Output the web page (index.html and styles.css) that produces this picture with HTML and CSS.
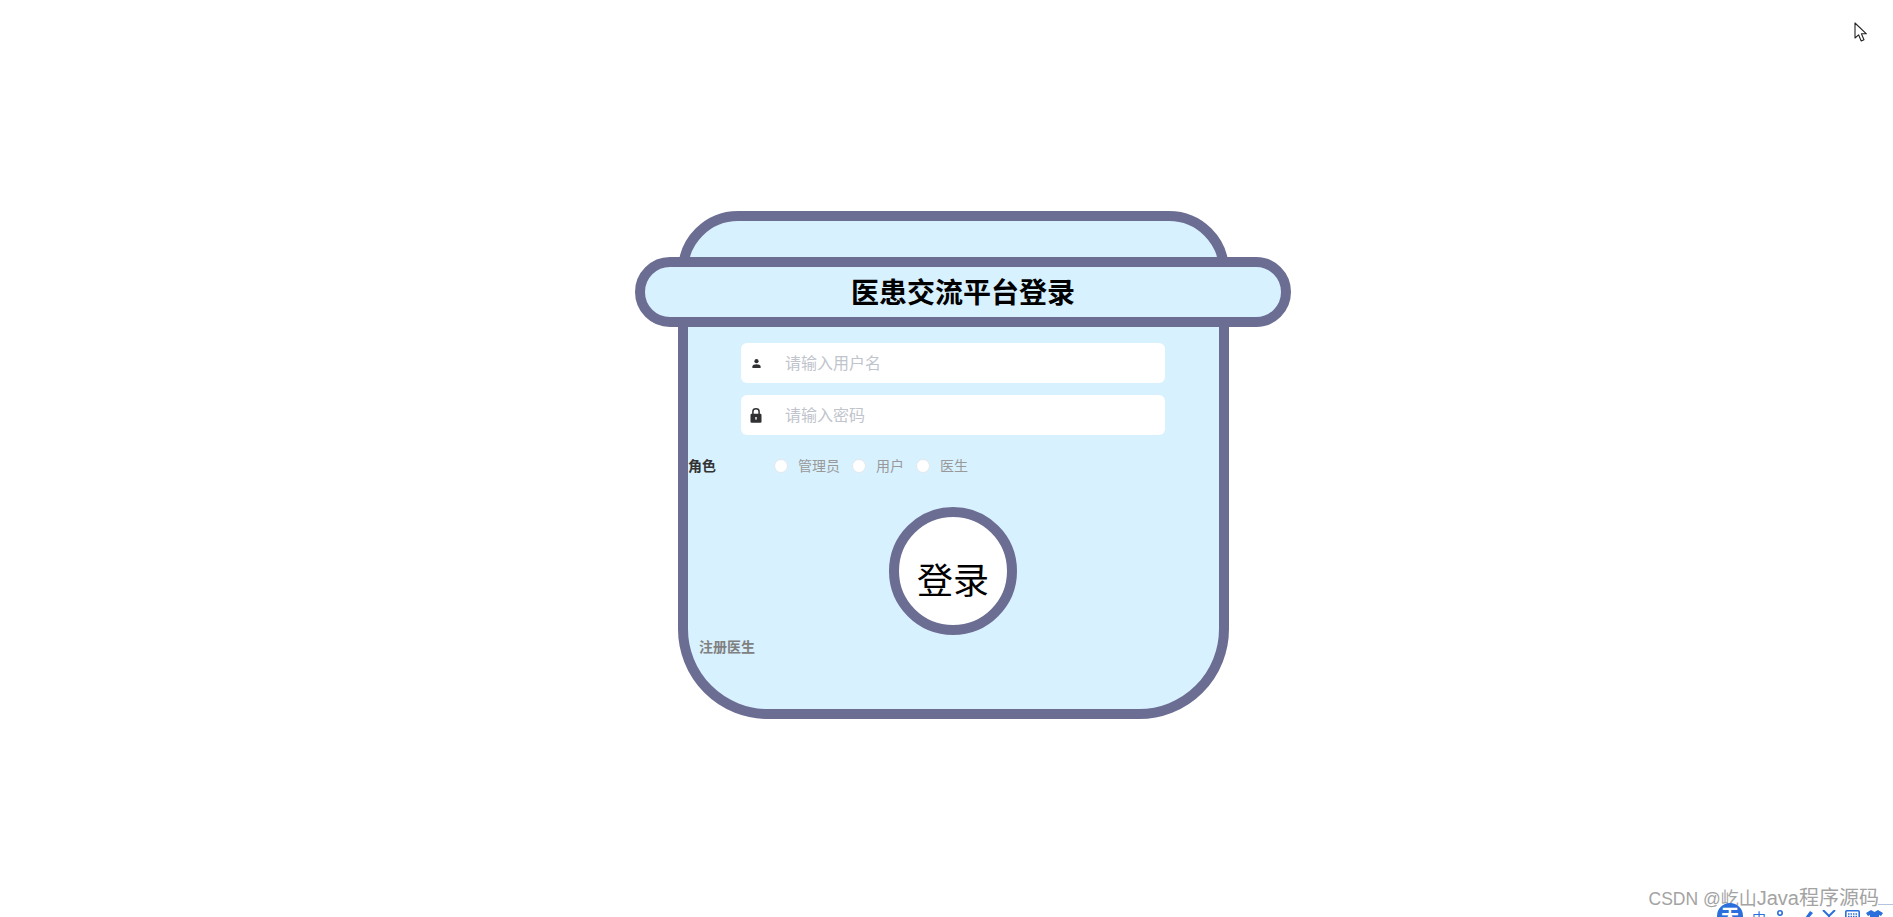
FILE: index.html
```html
<!DOCTYPE html>
<html lang="zh-CN">
<head>
<meta charset="utf-8">
<title>医患交流平台登录</title>
<link rel="stylesheet" href="styles.css">
</head>
<body>
<main class="page">
  <form class="card">
    <h1 class="title-bar">医患交流平台登录</h1>
    <div class="field">
      <span class="field-icon">
        <svg width="9" height="9" viewBox="0 0 9 9"><circle cx="4.5" cy="2.2" r="2.1" fill="#303133"/><path d="M0.4 9V7.6C0.4 6 2.4 5.2 4.5 5.2S8.6 6 8.6 7.6V9Z" fill="#303133"/></svg>
      </span>
      <span class="placeholder">请输入用户名</span>
    </div>
    <div class="field">
      <span class="field-icon">
        <svg width="12" height="15" viewBox="0 0 12 15"><path d="M2.9 6.5V3.4C2.9 1.8 4.2 0.8 6 0.8S9.1 1.8 9.1 3.4V6.5" fill="none" stroke="#303133" stroke-width="1.5"/><rect x="0.5" y="5.8" width="11" height="9" rx="1.2" fill="#303133"/><rect x="5.3" y="9" width="1.4" height="2.6" fill="#fff"/></svg>
      </span>
      <span class="placeholder">请输入密码</span>
    </div>
    <div class="role-row">
      <span class="role-label">角色</span>
      <div class="role-options">
        <label class="radio"><span class="radio-dot"></span>管理员</label>
        <label class="radio"><span class="radio-dot"></span>用户</label>
        <label class="radio"><span class="radio-dot"></span>医生</label>
      </div>
    </div>
    <button type="button" class="login">登录</button>
    <a class="register">注册医生</a>
  </form>
</main>

<svg class="cursor" width="14" height="21" viewBox="0 0 14 21"><path d="M1 1V16L4.6 12.8L7.2 19L10 17.8L7.4 11.8H12.4Z" fill="#fff" stroke="#222" stroke-width="1.1" stroke-linejoin="round"/></svg>

<div class="watermark"><span class="wm-small">CSDN @</span><span class="wm-mid">屹山</span>Java程序源码</div>
<div class="ime-line"></div>
<div class="ime">
  <span class="ime-logo">天</span>
  <span class="ime-item">中</span>
  <svg class="ime-svg" width="11" height="14" viewBox="0 0 11 14"><circle cx="5" cy="3" r="2.2" fill="none" stroke="#2a6fdb" stroke-width="1.6"/><circle cx="8" cy="11" r="1.6" fill="#2a6fdb"/></svg>
  <svg class="ime-svg" width="18" height="14" viewBox="0 0 18 14"><path d="M7 13L10 8L15 1L18 3L12 10Z" fill="#2a6fdb"/></svg>
  <svg class="ime-svg" width="14" height="14" viewBox="0 0 14 14"><path d="M1 0L7 6L13 0M7 6V14" fill="none" stroke="#2a6fdb" stroke-width="2"/></svg>
  <svg class="ime-svg" width="15" height="14" viewBox="0 0 15 14"><rect x="0.8" y="0.8" width="13.4" height="13" rx="1" fill="none" stroke="#2a6fdb" stroke-width="1.6"/><path d="M3 4H12M3 6.5H12" stroke="#2a6fdb" stroke-width="1.4" stroke-dasharray="1.5 1"/></svg>
  <svg class="ime-svg ime-shirt" width="17" height="14" viewBox="0 0 17 14"><path d="M5 0L0 3L2 6L4 5V14H13V5L15 6L17 3L12 0L8.5 2Z" fill="#2a6fdb"/></svg>
</div>
</body>
</html>
```
FILE: styles.css
```css
* { box-sizing: border-box; }
html, body { margin: 0; height: 100%; background: #fff; overflow: hidden; }
body { font-family: "Liberation Sans", "Noto Sans CJK SC", sans-serif; }
.page { padding: 211px 0 0 678px; }

.card {
  width: 551px;
  height: 508px;
  border: 10px solid #6c6d92;
  border-radius: 60px 60px 90px 90px;
  background: #d8f1ff;
  display: flex;
  flex-direction: column;
}
.title-bar {
  width: 656px;
  height: 70px;
  margin: 36px 0 0 -53px;
  border: 10px solid #6c6d92;
  border-radius: 35px;
  background: #d8f1ff;
  color: #000;
  font-size: 28px;
  font-weight: 700;
  line-height: 54px;
  text-align: center;
  flex: none;
}
.field {
  width: 424px;
  height: 40px;
  margin: 16px 0 0 53px;
  padding: 0 0 2px 44px;
  background: #fff;
  border-radius: 6px;
  display: flex;
  align-items: center;
  position: relative;
  flex: none;
}
.field + .field { margin-top: 12px; }
.field-icon {
  position: absolute;
  left: 9px;
  top: 0;
  width: 12px;
  height: 40px;
  display: flex;
  align-items: center;
  justify-content: center;
}
.placeholder { font-size: 16px; color: #c0c4cc; }

.role-row {
  height: 20px;
  margin-top: 20px;
  display: flex;
  align-items: center;
  flex: none;
}
.role-label {
  width: 86px;
  font-size: 14px;
  font-weight: 700;
  color: #333;
}
.role-options { display: flex; gap: 12px; }
.radio {
  display: flex;
  align-items: center;
  gap: 10px;
  font-size: 14px;
  color: #999;
}
.radio-dot {
  width: 14px;
  height: 14px;
  margin-top: 2px;
  border-radius: 50%;
  background: #fff;
  border: 1px solid #e4e7ed;
}
.login {
  width: 128px;
  height: 128px;
  margin: 32px 0 0 201px;
  padding: 22px 0 0;
  border: 10px solid #6c6d92;
  border-radius: 50%;
  background: #fff;
  color: #000;
  font-family: inherit;
  font-size: 36px;
  line-height: 40px;
  flex: none;
}
.register {
  margin: 2px 0 0 11px;
  font-size: 14px;
  font-weight: 700;
  line-height: 20px;
  color: #808080;
}

.cursor { position: absolute; left: 1854px; top: 22px; }
.watermark {
  position: absolute;
  right: 14px;
  top: 886px;
  font-size: 20px;
  line-height: 24px;
  color: #a3a3a3;
  white-space: nowrap;
}
.wm-small { font-size: 17.5px; }
.wm-mid { font-size: 18px; }
.ime-line {
  position: absolute;
  left: 1878px;
  right: 0;
  top: 904px;
  height: 1px;
  background: #b5c4dc;
}
.ime {
  position: absolute;
  left: 1717px;
  top: 903px;
  height: 14px;
  overflow: hidden;
  display: flex;
  align-items: flex-start;
  gap: 9px;
}
.ime-logo {
  width: 26px;
  height: 26px;
  border-radius: 50%;
  background: #2a6fdb;
  color: #fff;
  font-size: 18px;
  font-weight: 700;
  line-height: 26px;
  text-align: center;
  flex: none;
}
.ime-item { font-size: 14px; line-height: 20px; color: #2a6fdb; margin-top: 5px; }
.ime-svg { flex: none; margin-top: 7px; }
.ime-shirt { margin-left: -3px; }
```
